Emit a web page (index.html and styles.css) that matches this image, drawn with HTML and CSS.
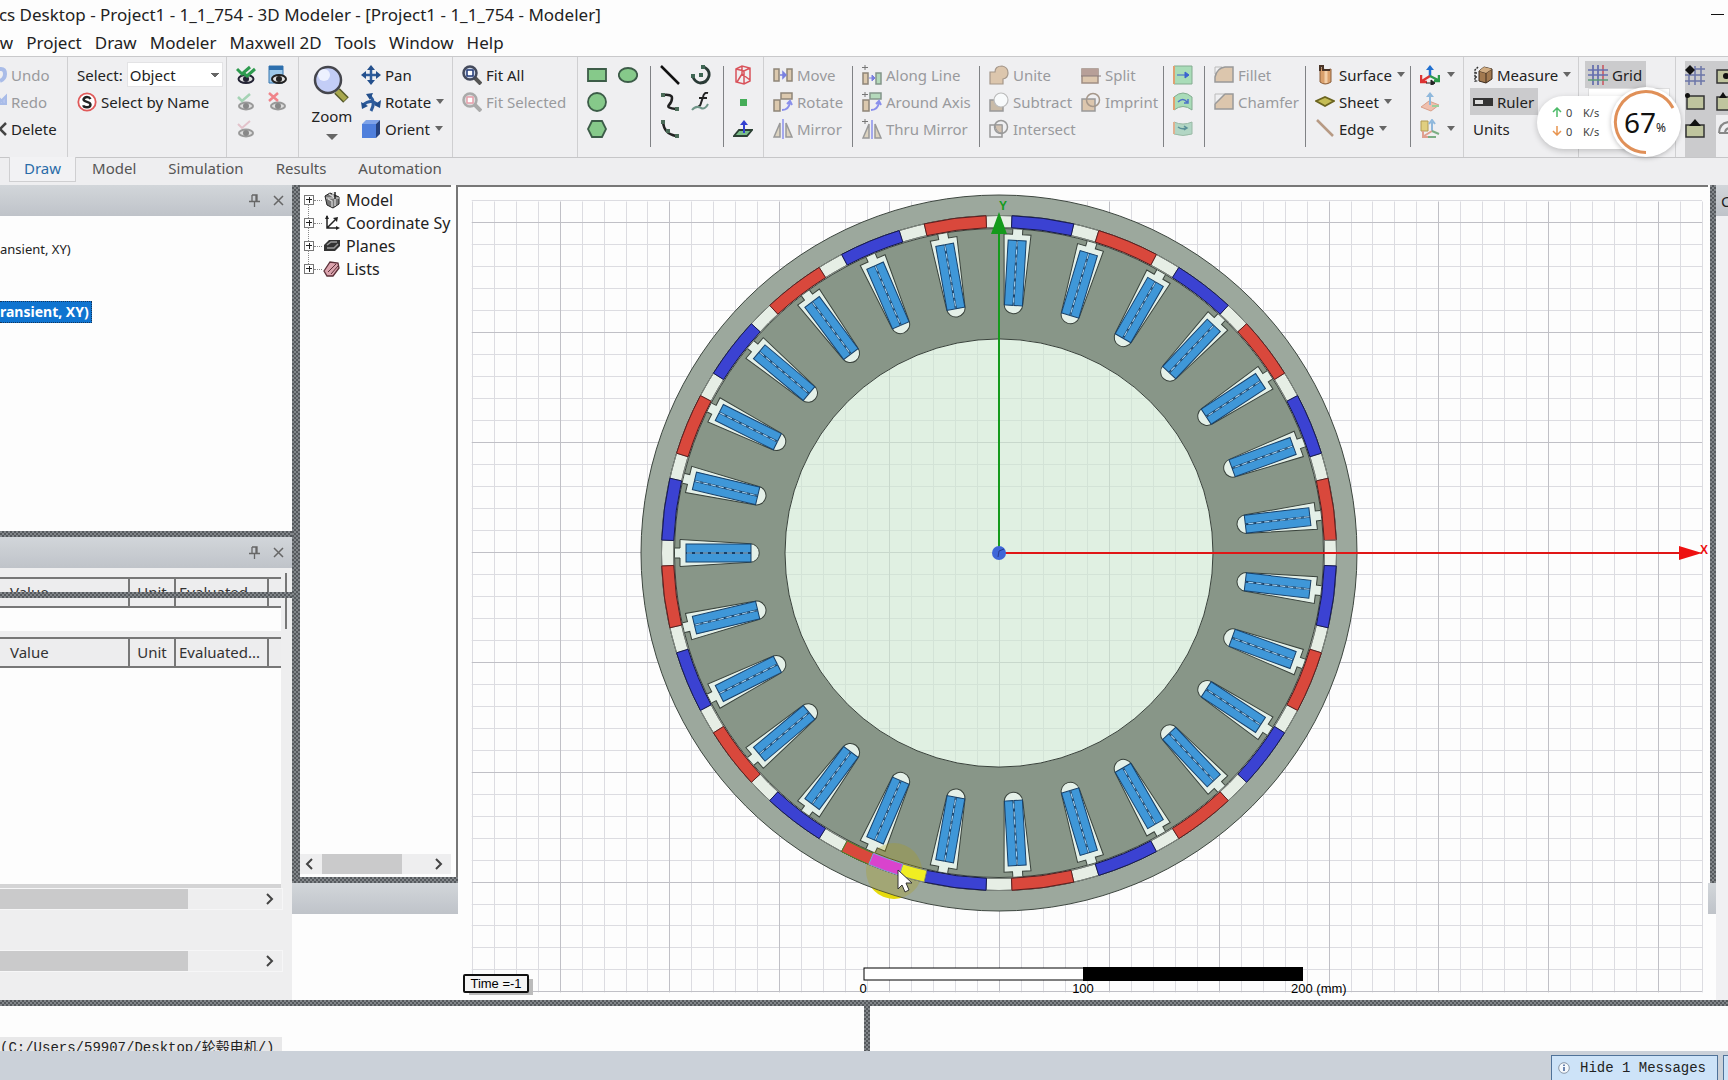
FILE: index.html
```html
<!DOCTYPE html>
<html lang="en">
<head>
    <meta charset="UTF-8">
    <meta name="viewport" content="width=device-width, initial-scale=1.0">
    <title>Project1 - 1_1_754 - 3D Modeler</title>
    <link rel="stylesheet" href="styles.css">
</head>
<body>
    <!-- Title bar -->
    <header class="titlebar">
        <span class="title-text">nics Desktop - Project1 - 1_1_754 - 3D Modeler - [Project1 - 1_1_754 - Modeler]</span>
        <button class="minimize" aria-label="Minimize"><svg width="13" height="13" viewBox="0 0 13 13"><path d="M0 6.500h13" stroke="#111"/></svg></button>
    </header>

    <!-- Menu -->
    <nav class="menubar">
        <button class="menu-cut">View</button>
        <button>Project</button>
        <button>Draw</button>
        <button>Modeler</button>
        <button>Maxwell 2D</button>
        <button>Tools</button>
        <button>Window</button>
        <button>Help</button>
    </nav>

    <!-- Ribbon -->
    <div class="ribbon">
        <div class="group g-edit">
            <div class="col col-cut">
                <button class="item" disabled><svg class="ico" viewBox="0 0 20 20"><path d="M8 4h6q4 0 4 5t-5 7" fill="none" stroke="#a9bce8" stroke-width="4"/></svg>Undo</button>
                <button class="item" disabled><svg class="ico" viewBox="0 0 20 20"><path d="M8 5q6 0 8 7M11 12h8V4z" fill="#b5c4ee" stroke="#a9bce8" stroke-width="2"/></svg>Redo</button>
                <button class="item"><svg class="ico" viewBox="0 0 20 20"><path d="M6 3l13 13M19 4L6 17" stroke="#444" stroke-width="2.500"/></svg>Delete</button>
            </div>
        </div>

        <div class="group g-select">
            <div class="col">
                <div class="item select-row">
                    <label for="selectMode">Select:</label>
                    <select id="selectMode"><option>Object</option></select>
                </div>
                <button class="item"><svg class="ico" viewBox="0 0 20 20"><circle cx="10" cy="10" r="8.700" fill="#fff" stroke="#e05a5a" stroke-width="1.800"/><path d="M13.500 7q-1-2-3.500-2T6.500 7.300q0 1.700 3.500 2.600t3.500 2.800q0 2.500-3.500 2.500t-3.500-2" fill="none" stroke="#222" stroke-width="2.400"/></svg>Select by Name</button>
            </div>
        </div>

        <div class="group g-visible">
            <div class="col icons">
                <button class="item" aria-label="Show"><svg class="ico" viewBox="0 0 20 20"><ellipse cx="10" cy="14" rx="7.500" ry="4" fill="#ddd" stroke="#223" stroke-width="2"/><circle cx="10" cy="14" r="3" fill="#223"/><path d="M1 4l5 5 8-7M7 8l4 3 8-7" fill="none" stroke="#2e9b4f" stroke-width="3"/></svg></button>
                <button class="item" disabled aria-label="Show selected"><svg class="ico" viewBox="0 0 20 20"><ellipse cx="10" cy="14" rx="7" ry="3.500" fill="#ddd" stroke="#999" stroke-width="2"/><circle cx="10" cy="14" r="3" fill="#888"/><path d="M2 5l4 4 8-7" fill="none" stroke="#a5d3b5" stroke-width="2.500"/></svg></button>
                <button class="item" disabled aria-label="Show only"><svg class="ico" viewBox="0 0 20 20"><ellipse cx="10" cy="14" rx="7" ry="3.500" fill="#ddd" stroke="#999" stroke-width="2"/><circle cx="10" cy="14" r="3" fill="#888"/><path d="M2 5l4 4 8-7" fill="none" stroke="#e3c3cb" stroke-width="2"/></svg></button>
            </div>
            <div class="col icons">
                <button class="item" aria-label="Visibility window"><svg class="ico" viewBox="0 0 20 20"><path d="M2 1h14v17H2z" fill="#9cc8ea" stroke="#3674ad"/><path d="M2 1h14v4H2z" fill="#2d6fae"/><ellipse cx="12" cy="14" rx="7" ry="4" fill="#ddd" stroke="#222" stroke-width="2"/><circle cx="12" cy="14" r="3" fill="#222"/></svg></button>
                <button class="item" disabled aria-label="Hide"><svg class="ico" viewBox="0 0 20 20"><ellipse cx="11" cy="14" rx="7" ry="3.500" fill="#ddd" stroke="#999" stroke-width="2"/><circle cx="11" cy="14" r="3" fill="#888"/><path d="M2 1l9 8M11 1L2 9" stroke="#f0848a" stroke-width="2.500"/></svg></button>
            </div>
        </div>

        <div class="group g-zoom">
            <button class="zoom-button">
                <svg width="38" height="40" viewBox="0 0 38 40"><path d="M24 27l9 9" stroke="#55592a" stroke-width="8"/><path d="M24 27l8.500 8.500" stroke="#a8a84e" stroke-width="5"/><circle cx="15" cy="16" r="13" fill="#c3cdf6" stroke="#45464d" stroke-width="2.500"/><circle cx="11" cy="11" r="6" fill="#edf1ff"/></svg>
                <span>Zoom</span>
                <span class="caret big"></span>
            </button>
            <div class="col">
                <button class="item"><svg class="ico" viewBox="0 0 20 20"><path d="M10 3v14M3 10h14" stroke="#2d5c9c" stroke-width="2.500"/><path d="M10 0l4 5H6zM10 20l4-5H6zM0 10l5-4v8zM20 10l-5-4v8z" fill="#234f8c"/></svg>Pan</button>
                <button class="item"><svg class="ico" viewBox="0 0 20 20"><path d="M10 19Q15 10 9 4M2 13q8-7 15 0" fill="none" stroke="#2d5c9c" stroke-width="3"/><path d="M12 1L5 2l4 6zM0 10l1 7 6-3zM20 8l-1 8-6-3z" fill="#234f8c"/></svg>Rotate<span class="caret"></span></button>
                <button class="item"><svg class="ico" viewBox="0 0 20 20"><path d="M1 5l4-4h14l-4 4z" fill="#7fa3e8"/><path d="M15 5l4-4v14l-4 4z" fill="#26427d"/><path d="M1 5h14v14H1z" fill="#4f7fdc"/></svg>Orient<span class="caret"></span></button>
            </div>
        </div>

        <div class="group g-fit">
            <div class="col">
                <button class="item"><svg class="ico" viewBox="0 0 20 20"><path d="M12 12l7 7" stroke="#555" stroke-width="4"/><circle cx="8" cy="8" r="6.500" fill="#cdd7ea" stroke="#444a5c" stroke-width="2.500"/><path d="M5 5h6v6H5z" fill="#fff" stroke="#223a78" stroke-width="1.500"/></svg>Fit All</button>
                <button class="item" disabled><svg class="ico" viewBox="0 0 20 20"><path d="M12 12l7 7" stroke="#aaa" stroke-width="4"/><circle cx="8" cy="8" r="6.500" fill="#ddd" stroke="#aaa" stroke-width="2.500"/><path d="M5 5h6v6H5z" fill="#fff" stroke="#e7a0ac" stroke-width="1.500"/></svg>Fit Selected</button>
            </div>
        </div>

        <div class="group g-shapes">
            <div class="section s-sheets">
                <div class="col icons">
                    <button class="item" aria-label="Rectangle"><svg class="ico" viewBox="0 0 20 20"><path d="M1 4h18v12H1z" fill="#86c98a" stroke="#3c5c48" stroke-width="1.800"/></svg></button>
                    <button class="item" aria-label="Circle"><svg class="ico" viewBox="0 0 20 20"><circle cx="10" cy="10" r="9" fill="#86c98a" stroke="#3c5c48" stroke-width="1.800"/></svg></button>
                    <button class="item" aria-label="Polygon"><svg class="ico" viewBox="0 0 20 20"><path d="M5 2h10l4 8-4 8H5l-4-8z" fill="#86c98a" stroke="#3c5c48" stroke-width="1.800"/></svg></button>
                </div>
                <div class="col icons">
                    <button class="item" aria-label="Ellipse"><svg class="ico" viewBox="0 0 20 20"><ellipse cx="10" cy="10" rx="9.200" ry="7" fill="#86c98a" stroke="#3c5c48" stroke-width="1.800"/></svg></button>
                </div>
            </div>
            <div class="section s-lines">
                <div class="col icons">
                    <button class="item" aria-label="Line"><svg class="ico" viewBox="0 0 20 20"><path d="M1 1l18 18" stroke="#111" stroke-width="2.500"/></svg></button>
                    <button class="item" aria-label="Spline"><svg class="ico" viewBox="0 0 20 20"><path d="M3 3q9-1 9 3t-3 7 7 4" fill="none" stroke="#222" stroke-width="2.500"/><path d="M1 1h4v4H1zM15 15h4v4h-4z" fill="#4b6b58"/></svg></button>
                    <button class="item" aria-label="Arc"><svg class="ico" viewBox="0 0 20 20"><path d="M3 3q1 12 13 14" fill="none" stroke="#222" stroke-width="2.500"/><path d="M1 1h4v4H1zM15 15h4v4h-4zM6 10h4v4H6z" fill="#4b6b58"/></svg></button>
                </div>
                <div class="col icons">
                    <button class="item" aria-label="Center arc"><svg class="ico" viewBox="0 0 20 20"><path d="M13 2q6 3 5 9-2 7-9 7-5-1-7-6" fill="none" stroke="#2a3a36" stroke-width="2.800"/><path d="M8 8h4v4H8zM0 9h4v4H0zM10 0h4v4h-4z" fill="#3f6654"/></svg></button>
                    <button class="item" aria-label="Equation curve"><svg class="ico" viewBox="0 0 20 20"><path d="M17 1q-4-1-5 4l-2 6q-1 4-3 3M8 6h8" fill="none" stroke="#222" stroke-width="2"/><path d="M1 18q4-5 9-2 4 2 7-4" fill="none" stroke="#6f9588" stroke-width="2"/></svg></button>
                </div>
            </div>
            <div class="section s-solids">
                <div class="col icons">
                    <button class="item" aria-label="Box"><svg class="ico" viewBox="0 0 20 20"><path d="M3 4l6-3 8 2v13l-6 3-8-2zM3 4l8 2 6-3M11 6v13M9 1v8l-5 8M9 9l8 6" fill="none" stroke="#d9535b" stroke-width="1.500"/></svg></button>
                    <button class="item" aria-label="Point"><svg class="ico" viewBox="0 0 20 20"><path d="M7 7h7v7H7z" fill="#45ad58"/></svg></button>
                    <button class="item" aria-label="Plane"><svg class="ico" viewBox="0 0 20 20"><path d="M6 11h13l-5 6H1z" fill="#79bd88" stroke="#2b4034" stroke-width="1.800"/><path d="M11 14V4" stroke="#3340d0" stroke-width="2"/><path d="M11 1l4 5H7z" fill="#3340d0"/></svg></button>
                </div>
            </div>
        </div>

        <div class="group g-ops">
            <div class="section s-arrange">
                <div class="col">
                    <button class="item" disabled><svg class="ico" viewBox="0 0 20 20"><path d="M1 4h5v12H1zM14 4h5v12h-5z" fill="#dcc9ae" stroke="#8f8578" stroke-width="1.500"/><path d="M7 10h4M10 7l3 3-3 3z" stroke="#7a80e0" stroke-width="1.500" fill="#7a80e0"/></svg>Move</button>
                    <button class="item" disabled><svg class="ico" viewBox="0 0 20 20"><path d="M8 1h11v6H8zM1 8h6v11H1z" fill="#dcc9ae" stroke="#8f8578" stroke-width="1.500"/><path d="M9 18q7 0 8-8M14 12l3-3 2 4" fill="none" stroke="#8a90ec" stroke-width="2"/></svg>Rotate</button>
                    <button class="item" disabled><svg class="ico" viewBox="0 0 20 20"><path d="M7 4v14H1zM13 4v14h6z" fill="#dcd3c0" stroke="#999" stroke-width="1.500"/><path d="M10 0v20" stroke="#8a90ec" stroke-width="1.500"/></svg>Mirror</button>
                </div>
            </div>
            <div class="section s-duplicate">
                <div class="col">
                    <button class="item" disabled><svg class="ico" viewBox="0 0 20 20"><path d="M3 0v5M0 2.500h6" stroke="#777"/><path d="M1 8h5v11H1z" fill="#dcc9ae" stroke="#8f8578" stroke-width="1.500"/><path d="M14 8h5v11h-5z" fill="#b4d9bb" stroke="#84958a" stroke-width="1.500"/><path d="M7 13h4M10 10l3 3-3 3z" stroke="#7a80e0" fill="#7a80e0"/></svg>Along Line</button>
                    <button class="item" disabled><svg class="ico" viewBox="0 0 20 20"><path d="M3 0v5M0 2.500h6" stroke="#777"/><path d="M8 1h11v6H8z" fill="#b4d9bb" stroke="#84958a" stroke-width="1.500"/><path d="M1 8h6v11H1z" fill="#dcc9ae" stroke="#8f8578" stroke-width="1.500"/><path d="M9 18q7 0 8-8M14 12l3-3 2 4" fill="none" stroke="#8a90ec" stroke-width="2"/></svg>Around Axis</button>
                    <button class="item" disabled><svg class="ico" viewBox="0 0 20 20"><path d="M3 0v5M0 2.500h6" stroke="#777"/><path d="M7 5v14H1zM13 5v14h6z" fill="#dcd3c0" stroke="#999" stroke-width="1.500"/><path d="M10 1v19" stroke="#8a90ec" stroke-width="1.500"/></svg>Thru Mirror</button>
                </div>
            </div>
            <div class="section s-boolean">
                <div class="col c-unite">
                    <button class="item" disabled><svg class="ico" viewBox="0 0 20 20"><path d="M1 7h5q0-6 7-6 6 1 6 7 0 5-5 6v5H1z" fill="#dcc6ad" stroke="#a5978a" stroke-width="1.200"/></svg>Unite</button>
                    <button class="item" disabled><svg class="ico" viewBox="0 0 20 20"><path d="M1 8h13v11H1z" fill="#c9bba8" stroke="#999" stroke-width="1.500"/><circle cx="12" cy="8" r="7" fill="#f8fafb" stroke="#bbb" stroke-width="1.200"/></svg>Subtract</button>
                    <button class="item" disabled><svg class="ico" viewBox="0 0 20 20"><path d="M1 6h12v12H1z" fill="none" stroke="#999" stroke-width="1.500"/><circle cx="12" cy="8" r="6.500" fill="none" stroke="#999" stroke-width="1.500"/><path d="M6 6h7v8q-6 0-7-8z" fill="#d3c3b2" stroke="#999"/></svg>Intersect</button>
                </div>
                <div class="col">
                    <button class="item" disabled><svg class="ico" viewBox="0 0 20 20"><path d="M1 4h16v14H1z" fill="#dcc6ad" stroke="#a08f84" stroke-width="1.500"/><path d="M1 4h16v7H1z" fill="#b79f98"/><path d="M0 11h20" stroke="#897b7b"/></svg>Split</button>
                    <button class="item" disabled><svg class="ico" viewBox="0 0 20 20"><path d="M1 7h13v12H1z" fill="#dcc6ad" stroke="#999" stroke-width="1.500"/><circle cx="12" cy="8" r="6.500" fill="none" stroke="#a5978a" stroke-width="1.500"/></svg>Imprint</button>
                </div>
            </div>
            <div class="section s-sweep">
                <div class="col icons">
                    <button class="item" aria-label="Sweep along vector"><svg class="ico" viewBox="0 0 20 20"><path d="M1 1h18v18H1z" fill="#a9dcb8" stroke="#84ac91"/><path d="M1 1v18" stroke="#e0a070" stroke-width="2"/><path d="M4 10h10M12 7l4 3-4 3z" stroke="#3b63d0" fill="#3b63d0"/></svg></button>
                    <button class="item" aria-label="Sweep around axis"><svg class="ico" viewBox="0 0 20 20"><path d="M1 5q9-8 18 0v13q-9-7-18 0z" fill="#a9dcb8" stroke="#84ac91"/><path d="M1 5v13" stroke="#e0a070" stroke-width="2"/><path d="M5 10q5-5 9 0M15 7v4h-4" stroke="#4b70c8" fill="none" stroke-width="1.500"/></svg></button>
                    <button class="item" aria-label="Sweep along path"><svg class="ico" viewBox="0 0 20 20"><path d="M1 3q9 4 18 0v12q-9 3-18 0z" fill="#b2d6c4" stroke="#9abaa6"/><path d="M1 3v12" stroke="#e0b090" stroke-width="2"/><path d="M5 8q4 3 8 1M11 7l3 2-3 2" stroke="#5b9098" fill="none" stroke-width="1.500"/></svg></button>
                </div>
            </div>
            <div class="section s-fillet">
                <div class="col">
                    <button class="item" disabled><svg class="ico" viewBox="0 0 20 20"><path d="M1 9V2h7" fill="none" stroke="#bbb"/><path d="M1 17V12Q3 3 11 2h8v15z" fill="#dcc6ad" stroke="#999" stroke-width="1.500"/></svg>Fillet</button>
                    <button class="item" disabled><svg class="ico" viewBox="0 0 20 20"><path d="M1 11V2h9" fill="none" stroke="#bbb"/><path d="M1 17v-5L11 2h8v15z" fill="#dcc6ad" stroke="#999" stroke-width="1.500"/></svg>Chamfer</button>
                </div>
            </div>
            <div class="section s-surface">
                <div class="col">
                    <button class="item"><svg class="ico" viewBox="0 0 20 20"><path d="M5 2v15q5 4 11 0V4q-4 2-8 0z" fill="#d9a06c" stroke="#8a5f3c"/><path d="M11 6v12" stroke="#f3cfa8" stroke-width="3"/><path d="M5 6V1h3v4h7" fill="none" stroke="#4a3528" stroke-width="2"/></svg>Surface<span class="caret"></span></button>
                    <button class="item"><svg class="ico" viewBox="0 0 20 20"><path d="M1 9l9-4 9 4-9 5z" fill="#c5bd55" stroke="#6b6420" stroke-width="1.800"/></svg>Sheet<span class="caret"></span></button>
                    <button class="item"><svg class="ico" viewBox="0 0 20 20"><path d="M2 1l16 16" stroke="#b79a84" stroke-width="2.500"/></svg>Edge<span class="caret"></span></button>
                </div>
            </div>
            <div class="section s-cs">
                <div class="col">
                    <button class="item" aria-label="Relative coordinate system"><svg class="ico" viewBox="0 0 20 20"><path d="M10 11V3" stroke="#1f6fd0" stroke-width="2.500"/><path d="M10 0l4 5H6z" fill="#1f6fd0"/><path d="M10 11l-8 5M1 10v7h6" stroke="#d33" stroke-width="2.500" fill="none"/><path d="M10 11l8 4M19 10v6h-5" stroke="#2c9a4a" stroke-width="2.500" fill="none"/><path d="M6 18h6M11 15l4 3-4 3z" fill="#222" stroke="#222"/></svg><span class="caret far"></span></button>
                    <button class="item" disabled aria-label="Face coordinate system"><svg class="ico" viewBox="0 0 20 20"><path d="M1 15l8-6 10 4-8 6z" fill="#f0c0ae" stroke="#d9a08a"/><path d="M10 13V4" stroke="#8fb8dc" stroke-width="2"/><path d="M10 0l4 5H6z" fill="#8fb8dc"/><path d="M12 14h7" stroke="#9ccf9c" stroke-width="2"/></svg></button>
                    <button class="item" disabled aria-label="Object coordinate system"><svg class="ico" viewBox="0 0 20 20"><path d="M1 2h7v10H1z" fill="#e0cf80" stroke="#b09a55"/><path d="M12 12V3M9 5l3-4 3 4" stroke="#8fb8dc" stroke-width="2" fill="none"/><path d="M12 12l-8 5M3 12v6h6" stroke="#e0a090" stroke-width="2" fill="none"/><path d="M12 12l7 3M8 18h8" stroke="#7cae84" stroke-width="2"/></svg><span class="caret far"></span></button>
                </div>
            </div>
        </div>

        <div class="group g-measure">
            <div class="col">
                <button class="item"><svg class="ico" viewBox="0 0 20 20"><path d="M6 6l5-4 8 2v10l-6 4-7-2z" fill="#a2794f" stroke="#3c2c1f"/><path d="M6 6l7 2v10M13 8l6-4" fill="none" stroke="#3c2c1f"/><path d="M6 6l5-4 8 2-6 4z" fill="#d1ad83"/><path d="M5 2L2 5v11h3M2 8h3M2 12h3" stroke="#333" stroke-width="1.500" fill="none" stroke-dasharray="2 1"/></svg>Measure<span class="caret"></span></button>
                <button class="item pressed"><svg class="ico" viewBox="0 0 20 20"><path d="M0 6h20v8H0z" fill="#333"/><path d="M2 8h8v4H2z" fill="#ddd"/></svg>Ruler</button>
                <button class="item">Units</button>
            </div>
        </div>

        <div class="group g-grid">
            <div class="col">
                <button class="item pressed"><svg class="ico" viewBox="0 0 20 20"><path d="M5 0v20M10 0v20" stroke="#5560a8" stroke-width="1.500"/><path d="M15 0v20" stroke="#c9505a" stroke-width="1.500"/><path d="M0 5h20M0 10h20" stroke="#6470b0" stroke-width="1.500"/><path d="M0 15h20" stroke="#5b9a78" stroke-width="1.500"/></svg>Grid</button>
                <input class="grid-plane" type="text" aria-label="Grid plane">
            </div>
        </div>

        <div class="group g-snap">
            <div class="col icons pressed-col">
                <button class="item" aria-label="Snap to grid"><svg class="ico" viewBox="0 0 20 20"><path d="M10 1v19M16 1v19M4 10v10M0 10h20M0 16h20M10 4h10" stroke="#6c76a8" stroke-width="1.500"/><path d="M5 0l5 5-5 5-5-5z" fill="#111"/></svg></button>
                <button class="item" aria-label="Snap to vertex"><svg class="ico" viewBox="0 0 20 20"><path d="M2 4h17v13H2z" fill="#bfc49e" stroke="#333" stroke-width="1.500"/><circle cx="2.500" cy="3.500" r="2.500" fill="#111"/></svg></button>
                <button class="item" aria-label="Snap to edge center"><svg class="ico" viewBox="0 0 20 20"><path d="M1 6h18v12H1z" fill="#bfc49e" stroke="#333" stroke-width="1.500"/><path d="M10 0l6 7H4z" fill="#111"/></svg></button>
            </div>
            <div class="col icons">
                <button class="item pressed" aria-label="Snap to face center"><svg class="ico" viewBox="0 0 20 20"><path d="M1 5h18v13H1z" fill="#bfc49e" stroke="#333" stroke-width="1.500"/><circle cx="10" cy="11" r="3" fill="#111"/></svg></button>
                <button class="item pressed" aria-label="Snap to quadrant"><svg class="ico" viewBox="0 0 20 20"><path d="M1 5h18v13H1z" fill="#bfc49e" stroke="#333" stroke-width="1.500"/><path d="M7 0l4 6H3z" fill="#111"/></svg></button>
                <button class="item" aria-label="Snap to arc"><svg class="ico" viewBox="0 0 20 20"><path d="M3 14q0-10 10-11M3 14h12M9 14q0-4 4-5" fill="none" stroke="#888" stroke-width="2"/></svg></button>
            </div>
        </div>
    </div>

    <!-- Ribbon tabs -->
    <nav class="tabs">
        <button class="tab active">Draw</button>
        <button class="tab">Model</button>
        <button class="tab">Simulation</button>
        <button class="tab">Results</button>
        <button class="tab">Automation</button>
    </nav>

    <main class="workspace">
        <!-- Project manager and properties -->
        <aside class="left-dock">
            <div class="dock-head">
                <button aria-label="Pin"><svg width="11" height="13" viewBox="0 0 11 13"><path d="M3 1h5v6M3 1v6M0 7.500h11M5.500 8v5M7 1v6" fill="none" stroke="#666" stroke-width="1.300"/></svg></button>
                <button aria-label="Close"><svg width="11" height="11" viewBox="0 0 11 11"><path d="M1 1l9 9M10 1l-9 9" stroke="#666" stroke-width="1.500"/></svg></button>
            </div>
            <div class="project-tree">
                <p>ansient, XY)</p>
                <p class="selected">ransient, XY)</p>
            </div>
            <div class="hsplit"></div>
            <div class="dock-head">
                <button aria-label="Pin"><svg width="11" height="13" viewBox="0 0 11 13"><path d="M3 1h5v6M3 1v6M0 7.500h11M5.500 8v5M7 1v6" fill="none" stroke="#666" stroke-width="1.300"/></svg></button>
                <button aria-label="Close"><svg width="11" height="11" viewBox="0 0 11 11"><path d="M1 1l9 9M10 1l-9 9" stroke="#666" stroke-width="1.500"/></svg></button>
            </div>
            <div class="properties">
                <div class="prop-clip">
                    <table class="props">
                        <tr><th class="c-value">Value</th><th class="c-unit">Unit</th><th class="c-eval">Evaluated...</th><th></th></tr>
                    </table>
                    <div class="hsplit ghost"></div>
                </div>
                <div class="prop-main">
                    <table class="props">
                        <tr><th class="c-value">Value</th><th class="c-unit">Unit</th><th class="c-eval">Evaluated...</th><th></th></tr>
                    </table>
                </div>
                <div class="scrollbar long"><span class="thumb"></span><svg width="8" height="12" viewBox="0 0 8 12"><path d="M1 1l5 5-5 5" fill="none" stroke="#444" stroke-width="2"/></svg></div>
                <div class="scrollbar long"><span class="thumb"></span><svg width="8" height="12" viewBox="0 0 8 12"><path d="M1 1l5 5-5 5" fill="none" stroke="#444" stroke-width="2"/></svg></div>
            </div>
        </aside>

        <!-- Model tree -->
        <section class="model-dock">
            <div class="model-top">
                <div class="vsplit"></div>
                <div class="model-tree">
                    <ul>
                        <li><span class="plus"></span><svg class="tico" viewBox="0 0 18 18"><path d="M2 5l5-3 9 4v7l-6 4-6-3z" fill="#777" stroke="#222"/><path d="M6 3l6 4v8M10 5V1M5 8l4 2v6M3 7h13" fill="none" stroke="#ddd" stroke-width="1.200"/><path d="M12 1v7" stroke="#222" stroke-width="1.500"/></svg>Model</li>
                        <li><span class="plus"></span><svg class="tico" viewBox="0 0 18 18"><path d="M4 2v12h11M4 14l8-8" fill="none" stroke="#222" stroke-width="1.500"/><path d="M2 5l2-4 2 4zM13 12l4 2-4 2zM10 4l5-1-1 5z" fill="#222"/></svg>Coordinate Systems</li>
                        <li><span class="plus"></span><svg class="tico" viewBox="0 0 18 18"><path d="M1 8l5-5h11v6l-5 5H1z" fill="#333"/><path d="M4 8l4-3h6M4 11h7l4-4" fill="none" stroke="#999" stroke-width="1.500"/></svg>Planes</li>
                        <li><span class="plus"></span><svg class="tico" viewBox="0 0 18 18"><path d="M1 11l6-9 8 1 1 5-6 8H4z" fill="#dba3ad" stroke="#5b3038" stroke-width="1.300"/><path d="M5 12l8-8M8 14l7-8" stroke="#5b3038"/></svg>Lists</li>
                    </ul>
                    <div class="scrollbar short"><svg width="8" height="12" viewBox="0 0 8 12"><path d="M7 1L2 6l5 5" fill="none" stroke="#444" stroke-width="2"/></svg><span class="thumb"></span><svg class="end" width="8" height="12" viewBox="0 0 8 12"><path d="M1 1l5 5-5 5" fill="none" stroke="#444" stroke-width="2"/></svg></div>
                </div>
            </div>
            <div class="hsplit"></div>
            <div class="dock-head"></div>
            <div class="model-empty"></div>
        </section>

        <!-- Drawing view -->
        <section class="view">
            <svg id="motor" viewBox="-541 -366 1250 813">
                <g id="grid"></g>
                <circle class="halo" cx="-105" cy="318" r="28"/>
                <circle class="bore" r="214"/>
                <g id="parts"></g>
                <circle class="halo-top" cx="-105" cy="318" r="28"/>
                <g id="picked"></g>
                <g class="axis-x">
                    <path d="M0 0H682" />
                    <path class="head" d="M680 -7l23 7-23 7z"/>
                    <text x="701" y="1">X</text>
                </g>
                <g class="axis-y">
                    <path d="M0 0V-325"/>
                    <path class="head" d="M-8 -319l8-22 8 22z"/>
                    <text x="0" y="-343">Y</text>
                </g>
                <circle class="origin" r="7"/>
                <path d="M-1 4l1-6 5-2" fill="none" stroke="#25398f"/>
                <path class="pointer" d="M-101 317v19l4-4 3 7 4-2-3-7h6z"/>
                <g class="scale">
                    <rect class="empty" x="-135" y="415" width="220" height="12"/>
                    <rect x="84" y="414" width="220" height="14"/>
                    <text x="-136" y="440">0</text>
                    <text x="84" y="440">100</text>
                    <text class="left" x="292" y="440">200 (mm)</text>
                </g>
                <g class="time">
                    <rect class="shade" x="-530" y="426" width="64" height="16"/>
                    <rect class="box" x="-535" y="422" width="64" height="17" rx="1"/>
                    <text x="-503" y="435">Time =-1</text>
                </g>
            </svg>
        </section>

        <aside class="right-dock">
            <div class="right-split">
                <div class="vsplit"></div>
                <div class="dock-head"></div>
                <div class="model-empty"></div>
            </div>
            <div class="right-panel">
                <div class="dock-head">C</div>
            </div>
        </aside>
    </main>

    <!-- Message manager -->
    <div class="hsplit"></div>
    <section class="messages">
        <div class="message-list"><p>(C:/Users/59907/Desktop/轮毂电机/)</p></div>
        <div class="vsplit thin"></div>
        <div class="progress"></div>
    </section>

    <footer class="statusbar">
        <button><svg width="12" height="12" viewBox="0 0 12 12"><circle cx="6" cy="6" r="5.300" fill="#f4f8fc" stroke="#8a97a8"/><path d="M6 5v4M6 2.500v1.500" stroke="#3f5f96" stroke-width="1.500"/></svg>Hide 1 Messages</button>
        <button class="second" aria-label="Show progress"></button>
    </footer>

    <!-- Floating system monitor -->
    <div class="monitor">
        <div class="speeds">
            <p><svg width="10" height="10" viewBox="0 0 10 10"><path d="M5 10V1M1 5l4-4 4 4" fill="none" stroke="#4cba68" stroke-width="1.500"/></svg><span>0</span><span>K/s</span></p>
            <p><svg width="10" height="10" viewBox="0 0 10 10"><path d="M5 0v9M1 5l4 4 4-4" fill="none" stroke="#e89550" stroke-width="1.500"/></svg><span>0</span><span>K/s</span></p>
        </div>
        <div class="gauge">
            <svg viewBox="-35 -35 70 70"><path d="M27 -14A30.500 30.500 0 1 0 0 30.500" fill="none" stroke="#e09058" stroke-width="3"/></svg>
            <span class="num">67</span><span class="pct">%</span>
        </div>
    </div>

    <script src="script.js"></script>
</body>
</html>
```
FILE: styles.css
```css
* {
    box-sizing: border-box;
}
body {
    margin: 0;
    height: 100vh;
    display: flex;
    flex-direction: column;
    overflow: hidden;
    background: #fdfdfd;
    color: #222;
    font-family: "Noto Sans", "Noto Sans CJK SC", sans-serif;
    font-size: 15px;
}
button {
    font: inherit;
    color: inherit;
    background: none;
    border: none;
    padding: 0;
    margin: 0;
    white-space: nowrap;
}
p, ul {
    margin: 0;
    padding: 0;
}

/* title and menu */
.titlebar {
    flex: none;
    height: 28px;
    display: flex;
    align-items: center;
    justify-content: space-between;
    padding-right: 4px;
    font-size: 17px;
    white-space: nowrap;
}
.title-text {
    margin-left: -16px;
}
.minimize {
    display: flex;
}
.menubar {
    flex: none;
    height: 28px;
    display: flex;
    align-items: center;
    gap: 13px;
    font-size: 17px;
}
.menu-cut {
    margin-left: -24px;
}

/* ribbon */
.ribbon {
    flex: none;
    display: flex;
    height: 102px;
    background: #efeff1;
    border-top: 1px solid #c9c9cb;
    border-bottom: 1px solid #c6c6c8;
    overflow: hidden;
}
.group {
    flex: none;
    display: flex;
    padding: 4px 0 0 9px;
    border-right: 1px solid #cfcfd1;
}
.section {
    flex: none;
    display: flex;
    position: relative;
}
.section + .section {
    padding-left: 10px;
}
.section + .section::before {
    content: "";
    position: absolute;
    left: 0;
    top: 5px;
    width: 1px;
    height: 81px;
    background: #808285;
}
.col {
    display: flex;
    flex-direction: column;
    align-items: flex-start;
}
.col-cut {
    margin-left: -22px;
}
.item {
    height: 27px;
    display: flex;
    align-items: center;
    gap: 4px;
}
.item:disabled {
    color: #999a9d;
}
.icons {
    width: 31px;
}
.ico {
    width: 20px;
    height: 20px;
    flex: none;
}
.caret {
    border: 4px solid transparent;
    border-top: 5px solid #666;
    border-bottom: 0;
    margin-left: 1px;
}
.caret.far {
    margin-left: 3px;
}
.caret.big {
    border-width: 6px 6px 0;
}
.pressed, .pressed-col {
    background: #cbcbcd;
}
.pressed {
    padding: 0 4px 0 3px;
    margin-left: -3px;
}
.icons .pressed {
    padding: 0;
    margin: 0;
}
.g-edit { width: 68px; }
.g-select { width: 159px; }
.g-visible { width: 72px; }
.g-zoom { width: 154px; }
.g-fit { width: 125px; }
.g-shapes { width: 186px; }
.g-ops { width: 700px; }
.g-measure { width: 115px; }
.g-grid { width: 97px; }
.g-snap { flex: 1; border: none; }
.s-sheets { width: 63px; }
.s-lines { width: 73px; }
.s-arrange { width: 79px; }
.s-duplicate { width: 127px; }
.s-boolean { width: 184px; }
.s-sweep { width: 41px; }
.s-fillet { width: 101px; }
.s-surface { width: 105px; }
.c-unite { width: 92px; }
.select-row select {
    appearance: none;
    width: 96px;
    height: 25px;
    border: 1px solid #e3e3e5;
    border-radius: 0;
    background-color: #fff;
    background-image: linear-gradient(45deg, transparent 50%, #666 50%), linear-gradient(-45deg, transparent 50%, #666 50%);
    background-size: 4px 4px;
    background-position: 83px 10px, 87px 10px;
    background-repeat: no-repeat;
    font: inherit;
    color: inherit;
    padding: 0 2px;
}
.zoom-button {
    width: 48px;
    height: 84px;
    padding-top: 3px;
    display: flex;
    flex-direction: column;
    align-items: center;
    line-height: 24px;
}
.zoom-button + .col {
    margin-left: 5px;
}
.zoom-button .caret {
    margin: 6px 0 0;
}
.grid-plane {
    width: 82px;
    height: 24px;
    border: 1px solid #dededf;
    background: #fff;
}

/* tabs under the ribbon */
.tabs {
    flex: none;
    height: 27px;
    display: flex;
    padding-left: 9px;
    background: #eeeef0;
    color: #555;
}
.tab {
    height: 24px;
    padding: 0 16px 4px;
    line-height: 20px;
}
.tab.active {
    margin-top: -1px;
    height: 25px;
    padding: 0 14px 3px;
    color: #2a6ca8;
    background: #f2f2f4;
    border: 1px solid #cfcfd1;
    border-top: none;
}

/* docks */
.workspace {
    flex: 1;
    min-height: 0;
    display: flex;
}
.hsplit, .vsplit {
    flex: none;
    background-color: #82868a;
    background-image: linear-gradient(45deg, #55595d 25%, transparent 25%, transparent 75%, #55595d 75%),
        linear-gradient(45deg, #55595d 25%, transparent 25%, transparent 75%, #55595d 75%);
    background-size: 4px 4px;
    background-position: 0 0, 2px 2px;
}
.hsplit {
    height: 6px;
}
.vsplit {
    width: 8px;
}
.vsplit.thin {
    width: 6px;
    margin-top: -2px;
}
.dock-head {
    flex: none;
    height: 31px;
    display: flex;
    align-items: center;
    justify-content: flex-end;
    gap: 13px;
    padding-right: 8px;
    background: linear-gradient(#d2d6da, #bfc3c9);
}
.dock-head button {
    display: flex;
}
.left-dock {
    flex: none;
    width: 292px;
    display: flex;
    flex-direction: column;
    background: #eeeeef;
}
.project-tree {
    flex: 1;
    padding-top: 21px;
    background: #fdfdfd;
    font-size: 13px;
    line-height: 20px;
}
.project-tree p {
    padding: 2px 0;
}
.project-tree .selected {
    width: 92px;
    margin-top: 40px;
    padding: 0;
    background: #0f74d0;
    color: #fff;
    font-size: 14px;
    font-weight: bold;
    border: 1px dotted #14365c;
    border-left: none;
}
.properties {
    flex: none;
    height: 432px;
    padding: 5px 5px 0 0;
}
.prop-clip {
    position: relative;
    height: 56px;
    border-right: 2px solid #777;
    padding: 4px 4px 0 0;
}
.prop-clip::after {
    content: "";
    display: block;
    height: 23px;
    background: #fdfdfd;
}
.ghost {
    position: absolute;
    left: 0;
    right: -7px;
    top: 19px;
}
.prop-main {
    width: 281px;
    height: 251px;
    margin-top: 8px;
    background: #fdfdfd;
    border-bottom: 4px solid #d4d4d5;
}
.props {
    width: 281px;
    table-layout: fixed;
    border-collapse: collapse;
}
.props th {
    height: 29px;
    padding: 0 0 2px;
    font-weight: normal;
    line-height: 22px;
    text-align: left;
    color: #333;
    background: #ededee;
    border: 2px solid #777;
    border-width: 2px 2px 2px 0;
    white-space: nowrap;
}
.props th:last-child {
    border-right: none;
}
.props .c-value {
    width: 129px;
    padding-left: 10px;
}
.props .c-unit {
    width: 46px;
    text-align: center;
}
.props .c-eval {
    width: 93px;
    padding-left: 3px;
}
.scrollbar {
    display: flex;
    align-items: center;
    height: 20px;
    background: #eeeeef;
}
.scrollbar .thumb {
    align-self: stretch;
    background: #cacacb;
}
.long {
    width: 282px;
    margin-top: 1px;
    justify-content: space-between;
    padding-right: 8px;
    outline: 1px solid #f6f6f7;
}
.long + .long {
    margin-top: 42px;
}
.long .thumb {
    width: 188px;
}
.short .thumb {
    width: 80px;
    margin-left: 9px;
}
.short {
    padding: 0 8px 0 5px;
}
.short .end {
    margin-left: auto;
}

.model-dock {
    flex: none;
    width: 166px;
    display: flex;
    flex-direction: column;
}
.model-top {
    flex: 1;
    min-height: 0;
    display: flex;
    border-right: 2px solid #777;
}
.model-tree {
    flex: 1;
    min-width: 0;
    margin-right: 5px;
    padding-bottom: 3px;
    border-top: 2px solid #777;
    display: flex;
    flex-direction: column;
    justify-content: space-between;
    overflow: hidden;
}
.model-tree ul {
    list-style: none;
    padding: 1px 0 0 4px;
    font-size: 16px;
}
.model-tree li {
    position: relative;
    display: flex;
    align-items: center;
    height: 23px;
    white-space: nowrap;
}
.model-tree li + li::before {
    content: "";
    position: absolute;
    left: 4px;
    top: -7px;
    height: 14px;
    border-left: 1px dotted #888;
}
.plus {
    flex: none;
    width: 10px;
    height: 10px;
    border: 1px solid #777;
    background: linear-gradient(#222, #222) center / 6px 1px no-repeat, linear-gradient(#222, #222) center / 1px 6px no-repeat;
}
.plus::after {
    content: "";
    display: block;
    width: 8px;
    margin: 4px 0 0 9px;
    border-top: 1px dotted #888;
}
.tico {
    flex: none;
    width: 18px;
    height: 18px;
    margin: 0 5px 0 9px;
}
.model-empty {
    height: 86px;
}

/* drawing view */
.view {
    flex: 1;
    min-width: 0;
    border-top: 2px solid #777;
    background: #fdfdfd;
}
.view svg {
    display: block;
    width: 100%;
    height: 100%;
}
.minor { stroke: #dcdce1; }
.major { stroke: #c0c0c6; }
.halo { fill: #f6ee10; }
.halo-top { fill: #b4a000; opacity: .25; }
.bore { fill: #cde7d0; fill-opacity: .6; }
.ring { fill: #9ca89d; stroke: #3d463f; }
.band { fill: #e6eee5; stroke: #59615a; }
.stator { fill: #889688; stroke: #39423b; }
.n { fill: #d9483c; stroke: #5b1d1d; }
.s { fill: #3b42d2; stroke: #15184f; }
.n.edge { stroke: #4c8a2c; }
.picked { fill: #d943cd; stroke: #7fa6d8; }
.gap { fill: none; stroke: #7d857e; }
.gap.lit { fill: #f0ee22; }
.slot { fill: #e4f0e8; stroke: #39423b; }
.coil { fill: #3f97d8; stroke: #174069; }
.seam { stroke: #a9d4f2; stroke-dasharray: 5 3; }
.axis-x path { stroke: #e01616; stroke-width: 2; }
.axis-x .head, .axis-x text { fill: #ee1111; stroke: none; }
.axis-y path { stroke: #149a1c; stroke-width: 2; }
.axis-y .head, .axis-y text { fill: #149a1c; stroke: none; }
.axis-x text, .axis-y text {
    font: bold 12px "Liberation Sans", sans-serif;
}
.origin { fill: #3e66d8; }
.pointer { fill: #fff; stroke: #333; }
.scale text, .time text {
    font: 13px "Liberation Sans", sans-serif;
    text-anchor: middle;
}
.scale .left { text-anchor: start; }
.scale .empty { fill: #fff; stroke: #000; }
.time .shade { fill: #bbb; }
.time .box { fill: #f4f4f4; stroke: #111; stroke-width: 2; }

.right-dock {
    flex: none;
    width: 20px;
    display: flex;
}
.right-split {
    width: 8px;
    display: flex;
    flex-direction: column;
}
.right-split .vsplit {
    flex: 1;
    width: 6px;
    margin-left: 2px;
}
.right-panel {
    flex: 1;
    background: #f0f0f2;
    overflow: hidden;
}
.right-panel .dock-head {
    justify-content: flex-start;
    padding: 0 0 0 5px;
}

/* messages and status */
.messages {
    flex: none;
    height: 45px;
    display: flex;
}
.message-list {
    width: 50%;
    overflow: hidden;
}
.message-list p {
    display: inline-block;
    margin-top: 31px;
    padding-right: 8px;
    background: #e8e8e9;
    font: 14px/22px "Liberation Mono", "Noto Sans CJK SC", monospace;
    white-space: nowrap;
}
.progress {
    flex: 1;
}
.statusbar {
    flex: none;
    height: 29px;
    display: flex;
    justify-content: flex-end;
    gap: 5px;
    padding-top: 4px;
    background: #cbd1d9;
}
.statusbar button {
    display: flex;
    align-items: center;
    gap: 10px;
    width: 167px;
    padding-left: 6px;
    border: 1px solid #4f7299;
    border-bottom: none;
    background: #cde3f8;
    font: 14px "Liberation Mono", monospace;
}
.statusbar .second {
    width: 5px;
    padding: 0;
    border-right: none;
}

/* floating monitor */
.monitor {
    position: absolute;
    top: 87px;
    right: 47px;
    display: flex;
    align-items: center;
}
.speeds {
    width: 122px;
    height: 53px;
    margin-right: -48px;
    padding: 7px 0 0 15px;
    border-radius: 27px 0 0 27px;
    background: #fff;
    box-shadow: 0 2px 6px rgba(0, 0, 0, .2);
    font-size: 11px;
    line-height: 19px;
    color: #444;
}
.speeds p {
    display: flex;
    align-items: center;
}
.speeds span {
    width: 17px;
    padding-left: 4px;
}
.speeds span + span {
    width: 30px;
}
.gauge {
    position: relative;
    width: 70px;
    height: 70px;
    display: flex;
    align-items: center;
    padding-left: 13px;
    border-radius: 50%;
    background: #fff;
    box-shadow: 0 1px 5px rgba(0, 0, 0, .25);
}
.gauge svg {
    position: absolute;
    left: 0;
    top: 0;
    width: 70px;
    height: 70px;
}
.num {
    font-size: 28px;
    line-height: 36px;
    color: #111;
}
.pct {
    margin-top: 10px;
    font-size: 12px;
}
```
FILE: script.js
```javascript
// 24 pole, 27 slot hub motor cross section, 100 mm = 219.7 units
const grid = document.getElementById('grid');
const parts = document.getElementById('parts');
const picked = document.getElementById('picked');
const STEP = 21.97;

function line(x1, y1, x2, y2, cls) {
    return `<path class="${cls}" d="M${x1} ${y1}L${x2} ${y2}"/>`;
}

function point(r, deg) {
    const a = deg * Math.PI / 180;
    return `${(r * Math.cos(a)).toFixed(2)} ${(-r * Math.sin(a)).toFixed(2)}`;
}

// Closed arc segment between two radii
function segment(r1, r2, from, to, cls) {
    return `<path class="${cls}" d="M${point(r2, from)}A${r2} ${r2} 0 0 0 ${point(r2, to)}L${point(r1, to)}A${r1} ${r1} 0 0 1 ${point(r1, from)}Z"/>`;
}

function annulus(r1, r2, cls) {
    const circle = r => `M${r} 0A${r} ${r} 0 1 0 ${-r} 0A${r} ${r} 0 1 0 ${r} 0Z`;
    return `<path class="${cls}" fill-rule="evenodd" d="${circle(r2)}${circle(r1)}"/>`;
}

function drawGrid() {
    let minor = '';
    let major = '';
    for (let i = -24; i <= 32; i++) {
        const x = Math.round(i * STEP) + 0.5;
        const l = line(x, -16 * STEP, x, 20 * STEP, i % 5 ? 'minor' : 'major');
        if (i % 5) minor += l; else major += l;
    }
    for (let i = -16; i <= 20; i++) {
        const y = Math.round(i * STEP) - 0.5;
        const l = line(-24 * STEP, y, 32 * STEP, y, i % 5 ? 'minor' : 'major');
        if (i % 5) minor += l; else major += l;
    }
    grid.innerHTML = minor + major;
}

function drawMotor() {
    let out = annulus(337.5, 358, 'ring') + annulus(325.5, 337.5, 'band') + annulus(214, 324.5, 'stator');

    // magnets and the gaps between them
    for (let i = 0; i < 24; i++) {
        const mid = 7.5 + i * 15;
        out += segment(325.5, 337.5, mid + 5.3, mid + 9.7, 'gap');
        out += segment(325.5, 337.5, mid - 5.3, mid + 5.3, i % 2 ? 's' : 'n');
    }

    // slots with two coil sides each
    for (let i = 0; i < 27; i++) {
        out += `<g transform="rotate(${(-90 + i * 360 / 27).toFixed(2)})">
            <path class="slot" d="M-5 -324V-319H-13.500L-9.300 -249A9.300 9.300 0 0 0 9.300 -249L13.500 -319H5V-324"/>
            <rect class="coil" x="-9" y="-313" width="8.500" height="65"/>
            <rect class="coil" x="0.500" y="-313" width="8.500" height="65"/>
            <path class="seam" d="M0 -312V-249"/>
        </g>`;
    }
    parts.innerHTML = out;

    // magnet under the cursor
    picked.innerHTML = segment(325.5, 337.5, 252.8, 257.2, 'gap lit')
        + segment(325.5, 337.5, 242.2, 247.3, 'n edge')
        + segment(325.5, 337.5, 247.3, 252.8, 'picked');
}

drawGrid();
drawMotor();
```
